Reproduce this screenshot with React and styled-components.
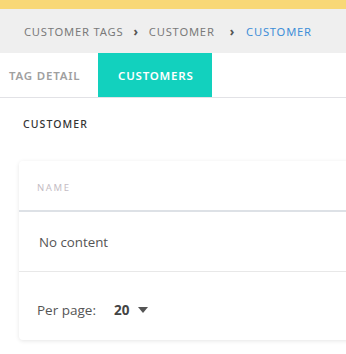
import React from "react";
import styled, { createGlobalStyle } from "styled-components";

const GlobalStyle = createGlobalStyle`
  body {
    margin: 0;
    background: #fff;
    overflow: hidden;
    font-family: "Open Sans", "Liberation Sans", sans-serif;
  }
`;

const Page = styled.div`
  width: 346px;
  height: 354px;
  overflow: hidden;
`;

const TopStripe = styled.div`
  height: 9px;
  background: #f8d877;
`;

const Breadcrumbs = styled.nav`
  height: 44px;
  background: #efefef;
  display: flex;
  align-items: center;
  padding-left: 24px;
  font-family: "Noto Sans", sans-serif;
  font-size: 11.2px;
  letter-spacing: 0.8px;
  white-space: nowrap;
`;

const Crumb = styled.span`
  color: ${(p) => (p.$active ? "#3d8ed8" : "#7a7a7a")};
`;

const Chevron = styled.span`
  color: #555;
  font-weight: 800;
  font-size: 12px;
  margin: 0 ${(p) => p.$right}px 0 ${(p) => p.$left}px;
`;

const Tabs = styled.div`
  height: 44px;
  display: flex;
  border-bottom: 1px solid #e2e2e6;
`;

const Tab = styled.div`
  display: flex;
  align-items: center;
  flex: none;
  padding-left: ${(p) => (p.$first ? 9 : 20)}px;
  width: ${(p) => p.$width}px;
  box-sizing: border-box;
  white-space: nowrap;
  font-family: "Noto Sans", sans-serif;
  font-size: 11.5px;
  font-weight: 600;
  letter-spacing: 0.8px;
  color: ${(p) => (p.$active ? "#fff" : "#a0a0a0")};
  background: ${(p) => (p.$active ? "#12d1be" : "transparent")};
`;

const SectionLabel = styled.h2`
  margin: 0;
  padding: 19px 0 0 23px;
  height: 44px;
  box-sizing: border-box;
  font-family: "Noto Sans", sans-serif;
  font-size: 10.5px;
  font-weight: 500;
  letter-spacing: 1.1px;
  color: #333;
`;

const Card = styled.div`
  margin: 19px 0 0 19px;
  width: 340px;
  background: #fff;
  border-radius: 4px;
  box-shadow: 0 1px 4px rgba(0, 0, 0, 0.1);
`;

const HeadRow = styled.div`
  height: 51px;
  display: flex;
  align-items: center;
  padding: 4px 0 0 18px;
  box-sizing: border-box;
  border-bottom: 2px solid #dde1e6;
  font-family: "Noto Sans", sans-serif;
  font-size: 9.5px;
  letter-spacing: 1.6px;
  color: #c4bcc4;
`;

const EmptyRow = styled.div`
  height: 59px;
  display: flex;
  align-items: center;
  padding-left: 20px;
  border-bottom: 1px solid #e8e8e8;
  font-size: 13.3px;
  color: #555;
`;

const Footer = styled.div`
  height: 68px;
  display: flex;
  align-items: center;
  padding: 8px 0 0 18px;
  box-sizing: border-box;
  font-size: 13.5px;
  color: #555;
`;

const PerPageValue = styled.span`
  font-weight: 700;
  margin-left: 18px;
  color: #444;
`;

const Caret = styled.span`
  display: inline-block;
  margin-left: 9px;
  border-left: 5.5px solid transparent;
  border-right: 5.5px solid transparent;
  border-top: 6px solid #555;
`;

export default function App() {
  return (
    <Page>
      <GlobalStyle />
      <TopStripe />
      <Breadcrumbs>
        <Crumb>CUSTOMER TAGS</Crumb>
        <Chevron $left={10} $right={10}>›</Chevron>
        <Crumb>CUSTOMER</Crumb>
        <Chevron $left={15} $right={11}>›</Chevron>
        <Crumb $active>CUSTOMER</Crumb>
      </Breadcrumbs>
      <Tabs>
        <Tab $first $width={98}>TAG DETAIL</Tab>
        <Tab $active $width={114}>CUSTOMERS</Tab>
      </Tabs>
      <SectionLabel>CUSTOMER</SectionLabel>
      <Card>
        <HeadRow>NAME</HeadRow>
        <EmptyRow>No content</EmptyRow>
        <Footer>
          Per page:
          <PerPageValue>20</PerPageValue>
          <Caret />
        </Footer>
      </Card>
    </Page>
  );
}
